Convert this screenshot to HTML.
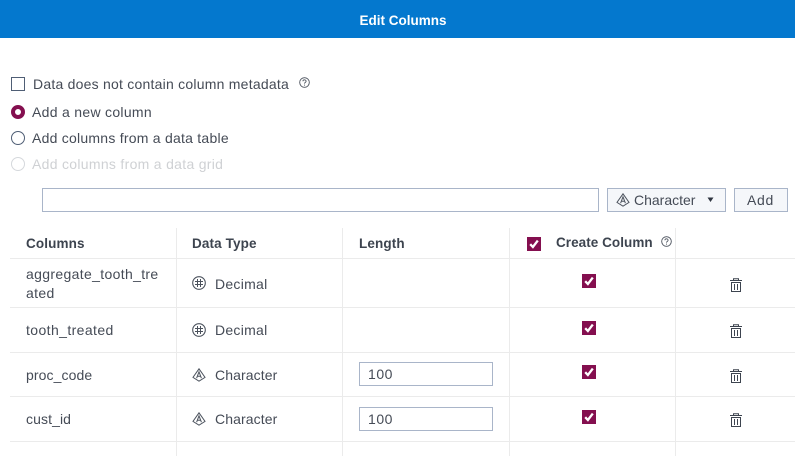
<!DOCTYPE html>
<html><head><meta charset="utf-8"><style>
html,body{margin:0;padding:0;background:#fff}
#p{position:relative;width:795px;height:456px;overflow:hidden;background:#fff;font-family:"Liberation Sans",sans-serif;font-size:14px;color:#454b56}
#p div,#p svg{position:absolute}
.t{white-space:nowrap;line-height:18px;letter-spacing:.2px}
.b{font-weight:bold;letter-spacing:.12px;color:#3d444f}
.h{background:#ebebeb;height:1px;left:10px;width:785px}
.v{background:#ebebeb;width:1px;top:228px;height:228px}
.in{background:#fff;border:1px solid #a9b5c9;box-sizing:border-box}
.btn{background:#f5f7fa;border:1px solid #a9b5c9;box-sizing:border-box}
.cb{width:14px;height:14px;background:#840f4f}
.rd{width:14px;height:14px;border-radius:50%;box-sizing:border-box}
</style></head><body><div id="p">
<svg width="0" height="0" style="display:none"><defs>
<symbol id="chk" viewBox="0 0 14 14"><path d="M3.2 7.2 5.9 10 10.8 3.6" fill="none" stroke="#fff" stroke-width="2.3"/></symbol>
<symbol id="A" viewBox="0 0 14 14"><path d="M7 .8 13 9.4 7 13.2 1 9.4Z" fill="none" stroke="#4b525d" stroke-width="1"/><path d="M4.6 10.2 7 3.8 9.4 10.2M5.4 8.3H8.6" fill="none" stroke="#4b525d" stroke-width="1"/></symbol>
<symbol id="D" viewBox="0 0 14 14"><circle cx="7" cy="7" r="6.3" fill="none" stroke="#4b525d" stroke-width="1.1"/><path d="M5.5 3V11M8.5 3V11M3 5.5H11M3 8.5H11" fill="none" stroke="#4b525d" stroke-width="1"/></symbol>
<symbol id="tr" viewBox="0 0 14 14"><path d="M1 2.5H13M4.5 2.5V.7H9.5V2.5M2.5 4.5H11.5V13.5H2.5ZM5.5 6V12M8.5 6V12" fill="none" stroke="#3d444f" stroke-width="1"/></symbol>
<symbol id="q" viewBox="0 0 11 11"><circle cx="5.5" cy="5.5" r="4.8" fill="none" stroke="#4b525d" stroke-width=".9"/><path d="M3.9 4.3C3.9 2.4 7.1 2.4 7.1 4.2 7.1 5.4 5.5 5.3 5.5 6.6M5.5 7.6V8.6" fill="none" stroke="#4b525d" stroke-width=".9"/></symbol>
</defs></svg>

<div style="left:0;top:0;width:795px;height:38px;background:#0478ce"></div>
<div class="t" style="left:0;top:12px;width:806px;text-align:center;color:#fff;font-weight:bold;font-size:13.5px;letter-spacing:0">Edit Columns</div>

<div style="left:11px;top:77px;width:14px;height:14px;box-sizing:border-box;border:1px solid #4f5e75"></div>
<div class="t" style="left:33px;top:75px;letter-spacing:.23px">Data does not contain column metadata</div>
<svg style="left:299px;top:77px" width="11" height="11"><use href="#q"/></svg>

<div class="rd" style="left:11px;top:105px;border:4px solid #840f4f;background:#fff"></div>
<div class="t" style="left:32px;top:103px;letter-spacing:.3px">Add a new column</div>
<div class="rd" style="left:11px;top:131px;border:1px solid #4f5e75"></div>
<div class="t" style="left:32px;top:129px;letter-spacing:.24px">Add columns from a data table</div>
<div class="rd" style="left:11px;top:157px;border:1px solid #d5d8dc"></div>
<div class="t" style="left:32px;top:155px;color:#cfd1d4;letter-spacing:.3px">Add columns from a data grid</div>

<div class="in" style="left:42px;top:188px;width:557px;height:24px"></div>
<div class="btn" style="left:607px;top:188px;width:119px;height:24px"></div>
<svg style="left:616px;top:193px" width="14" height="14"><use href="#A"/></svg>
<div class="t" style="left:634px;top:191px;letter-spacing:0">Character</div>
<svg style="left:707px;top:197px" width="8" height="6"><path d="M.5.5H6.5L3.5 5Z" fill="#2f3540"/></svg>
<div class="btn" style="left:734px;top:188px;width:54px;height:24px"></div>
<div class="t" style="left:747px;top:191px;letter-spacing:.7px">Add</div>

<div class="v" style="left:176px"></div>
<div class="v" style="left:342px"></div>
<div class="v" style="left:509px"></div>
<div class="v" style="left:675px"></div>
<div class="h" style="top:258px"></div>
<div class="h" style="top:307px"></div>
<div class="h" style="top:352px"></div>
<div class="h" style="top:396px"></div>
<div class="h" style="top:441px"></div>

<div class="t b" style="left:26px;top:235px;font-size:13.5px">Columns</div>
<div class="t b" style="left:192px;top:235px;font-size:13.5px">Data Type</div>
<div class="t b" style="left:359px;top:235px;font-size:13.5px">Length</div>
<div class="cb" style="left:527px;top:237px"></div>
<svg style="left:527px;top:237px" width="14" height="14"><use href="#chk"/></svg>
<div class="t b" style="left:556px;top:234px;font-size:13.5px;letter-spacing:.05px">Create Column</div>
<svg style="left:661px;top:236px" width="11" height="11"><use href="#q"/></svg>

<div class="t" style="left:26px;top:265px;letter-spacing:.34px">aggregate_tooth_tre</div>
<div class="t" style="left:26px;top:284px;letter-spacing:.34px">ated</div>
<svg style="left:192px;top:276px" width="14" height="14"><use href="#D"/></svg>
<div class="t" style="left:215px;top:275px;letter-spacing:.27px">Decimal</div>
<div class="cb" style="left:582px;top:274px"></div>
<svg style="left:582px;top:274px" width="14" height="14"><use href="#chk"/></svg>
<svg style="left:729px;top:278px" width="14" height="14"><use href="#tr"/></svg>

<div class="t" style="left:26px;top:321px;letter-spacing:.4px">tooth_treated</div>
<svg style="left:192px;top:323px" width="14" height="14"><use href="#D"/></svg>
<div class="t" style="left:215px;top:321px;letter-spacing:.27px">Decimal</div>
<div class="cb" style="left:582px;top:321px"></div>
<svg style="left:582px;top:321px" width="14" height="14"><use href="#chk"/></svg>
<svg style="left:729px;top:324px" width="14" height="14"><use href="#tr"/></svg>

<div class="t" style="left:26px;top:366px;letter-spacing:.1px">proc_code</div>
<svg style="left:192px;top:368px" width="14" height="14"><use href="#A"/></svg>
<div class="t" style="left:215px;top:366px;letter-spacing:.1px">Character</div>
<div class="in" style="left:359px;top:362px;width:134px;height:24px"></div>
<div class="t" style="left:368px;top:365px;letter-spacing:.55px">100</div>
<div class="cb" style="left:582px;top:365px"></div>
<svg style="left:582px;top:365px" width="14" height="14"><use href="#chk"/></svg>
<svg style="left:729px;top:369px" width="14" height="14"><use href="#tr"/></svg>

<div class="t" style="left:26px;top:410px;letter-spacing:.1px">cust_id</div>
<svg style="left:192px;top:412px" width="14" height="14"><use href="#A"/></svg>
<div class="t" style="left:215px;top:410px;letter-spacing:.1px">Character</div>
<div class="in" style="left:359px;top:407px;width:134px;height:24px"></div>
<div class="t" style="left:368px;top:410px;letter-spacing:.55px">100</div>
<div class="cb" style="left:582px;top:410px"></div>
<svg style="left:582px;top:410px" width="14" height="14"><use href="#chk"/></svg>
<svg style="left:729px;top:413px" width="14" height="14"><use href="#tr"/></svg>
</div></body></html>
